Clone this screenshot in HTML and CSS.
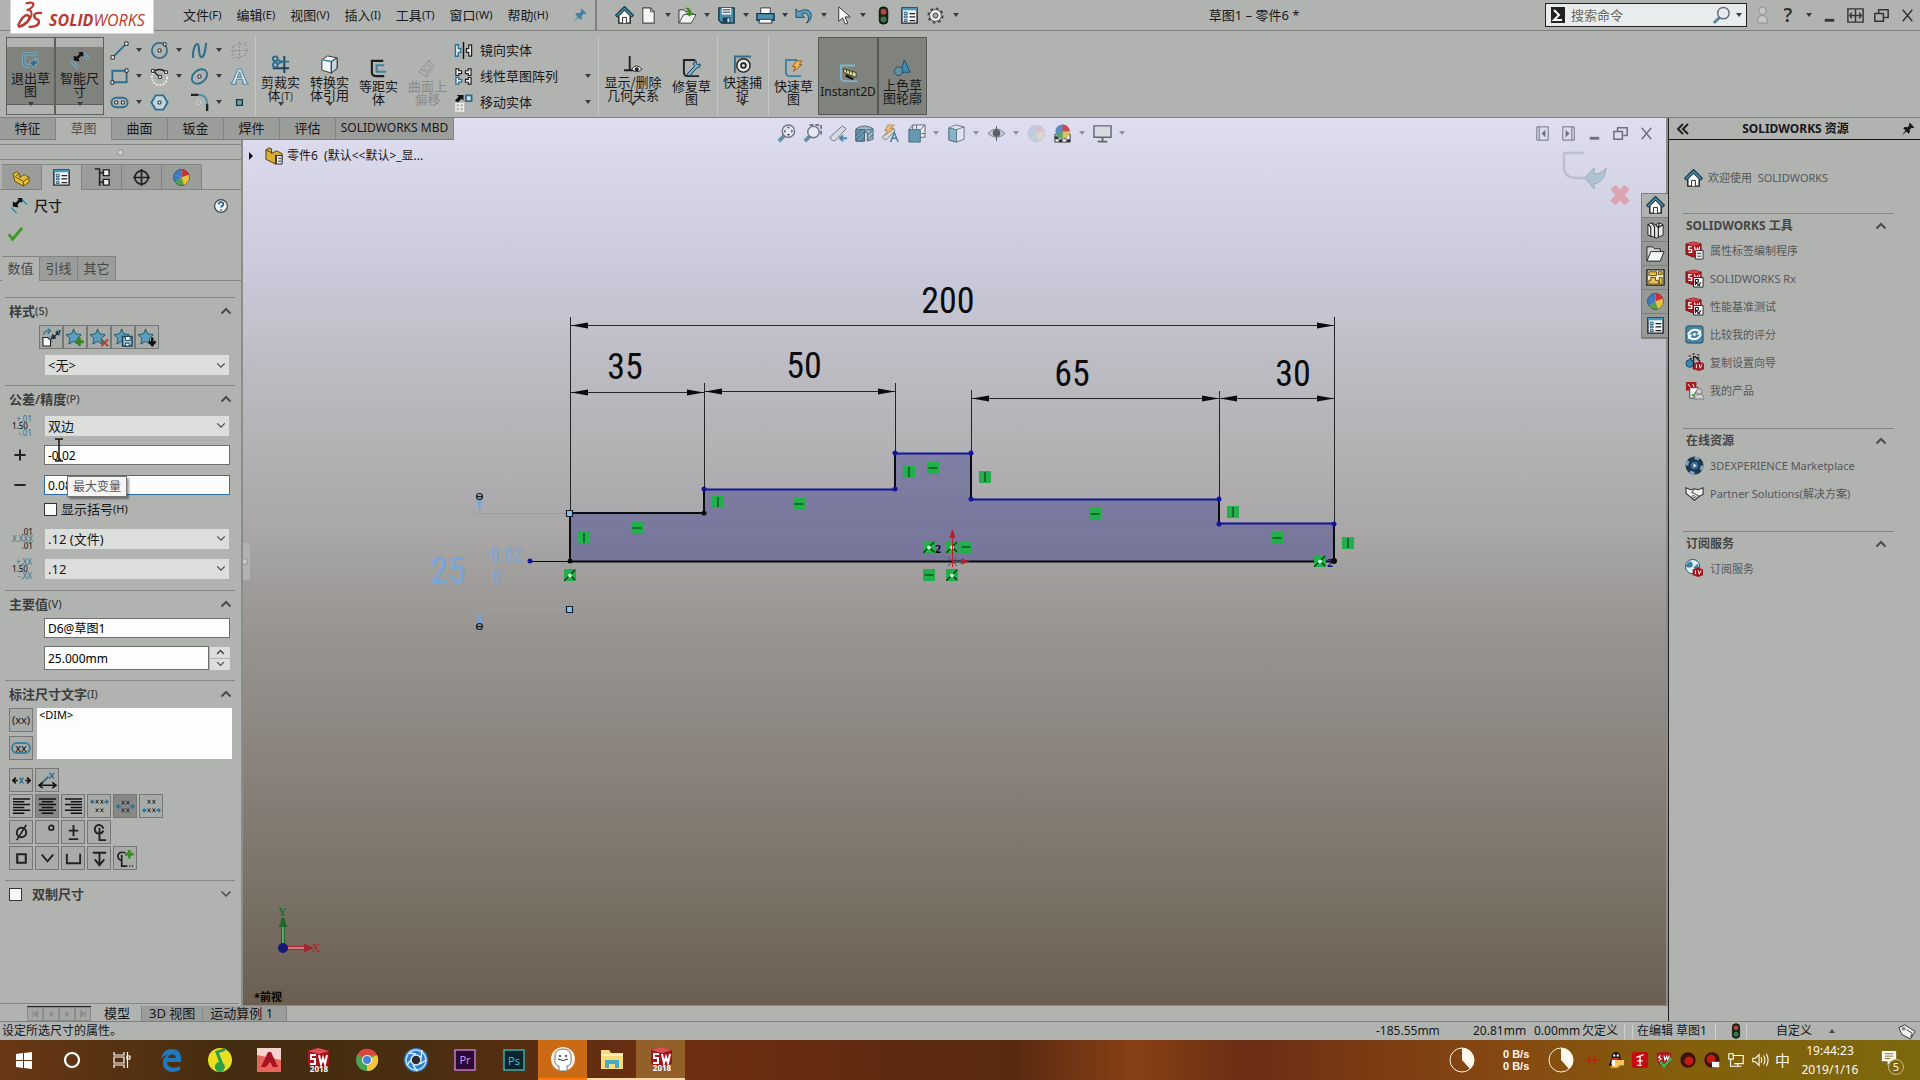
FILE: index.html
```html
<!DOCTYPE html>
<html lang="zh-CN">
<head>
<meta charset="utf-8">
<title>草图1 – 零件6 *</title>
<link rel="stylesheet" href="styles.css">
</head>
<body>
<svg class="sprite" aria-hidden="true">
  <defs>
    <symbol id="i-down" viewBox="0 0 6 4"><path d="M0 0h6L3 4z" fill="#3c3c3c"/></symbol>
    <symbol id="i-chevup" viewBox="0 0 12 8"><path d="M1.500 6.500 6 2l4.500 4.500" fill="none" stroke="#4a4c4a" stroke-width="2"/></symbol>
    <symbol id="i-chevdown" viewBox="0 0 12 8"><path d="M1.500 1.500 6 6l4.500-4.500" fill="none" stroke="#4a4c4a" stroke-width="1.500"/></symbol>
    <symbol id="i-home" viewBox="0 0 20 20"><path d="M4 10v8h12v-8l-6-6z" fill="#fff" stroke="#222" stroke-width="1.500"/><path d="M1 11 10 2l9 9" fill="none" stroke="#1d4052" stroke-width="3.500"/><path d="M2 10.500 10 2.800l8 7.700" fill="none" stroke="#4f9dbd" stroke-width="1.200"/><path d="M8 18v-6h4v6" fill="#fff" stroke="#222"/></symbol>
    <symbol id="i-new" viewBox="0 0 20 20"><path d="M4 2h8l4 4v12H4z" fill="#f4f6f6" stroke="#4a4d4d" stroke-width="1.200"/><path d="M12 2v4h4" fill="none" stroke="#4a4d4d"/></symbol>
    <symbol id="i-open" viewBox="0 0 20 20"><path d="M1 18V4h5l2 2h4" fill="#e5e8e8" stroke="#333"/><path d="M1 18 6 9h13l-5 9z" fill="#f3f3ee" stroke="#444"/><path d="M7 2c4-1 7 1 7 5h3l-5 4-4-4h3c0-2-1-4-4-5z" fill="#3f8a25"/></symbol>
    <symbol id="i-save" viewBox="0 0 20 20"><path d="M2 2h16v16H5l-3-3z" fill="#4b8fae" stroke="#123246" stroke-width="1.500"/><path d="M5 2h10v7H5z" fill="#eef3f5"/><path d="M6 4h8M6 6.500h8" stroke="#234" /><path d="M6 12h8v6H6z" fill="#223f50"/><path d="M11 13h2v4h-2z" fill="#dde"/></symbol>
    <symbol id="i-print" viewBox="0 0 20 20"><path d="M5 2h10v6H5z" fill="#fff" stroke="#333"/><path d="M1 8h18v7H1z" fill="#4f93b2" stroke="#12384d" stroke-width="1.500"/><path d="M4 14h12l1 4H3z" fill="#fff" stroke="#333"/></symbol>
    <symbol id="i-undo" viewBox="0 0 20 20"><path d="M1 3v9h9L7 9c4-3 8-1 7 6l-2 3c7-3 7-14-1-14-3 0-5 1-7 2z" fill="#5b9dc0" stroke="#1c4d6c"/></symbol>
    <symbol id="i-cursor" viewBox="0 0 20 20"><path d="M5 1v15l4-3.500 3 6.500 2.500-1-3-6.500H17z" fill="#fff" stroke="#333"/></symbol>
    <symbol id="i-light" viewBox="0 0 20 20"><rect x="5.500" y="1" width="9" height="18" rx="4" fill="#16281b" stroke="#111"/><circle cx="10" cy="6" r="3" fill="#b8443c"/><circle cx="10" cy="14" r="3" fill="#3c7a45"/></symbol>
    <symbol id="i-props" viewBox="0 0 20 20"><path d="M2 2h16v16H2z" fill="#f2f5f5" stroke="#223" stroke-width="1.500"/><path d="M2 2h16v2.500H2z" fill="#4a96b6"/><path d="M4.500 6.500h3v2.500h-3zM4.500 10.500h3v2h-3zM4.500 14.500h3v2h-3z" fill="#d6e8ef" stroke="#1f5a78"/><path d="M10 8h6M10 11.500h6M10 15.500h6" stroke="#222" stroke-width="1.300"/></symbol>
    <symbol id="i-gear" viewBox="0 0 20 20"><circle cx="10" cy="10" r="7.500" fill="none" stroke="#444" stroke-width="2" stroke-dasharray="3 2.890"/><circle cx="10" cy="10" r="6.200" fill="#f0f0ee" stroke="#444"/><circle cx="10" cy="10" r="2.600" fill="#aaa" stroke="#333"/></symbol>
    <symbol id="i-pin" viewBox="0 0 20 20"><path d="M12 2l6 6-2 1-1-1-3 3c1 2 0 4-1 5l-3-3-6 5 5-6-3-3c1-1 3-2 5-1l3-3-1-1z" fill="currentColor"/></symbol>
    <symbol id="i-exit" viewBox="0 0 20 20"><path d="M18 3H3v9q0 4 5 4h1" fill="none" stroke="#8fbfd3" stroke-width="3"/><path d="M18 3H3v9q0 4 5 4h1" fill="none" stroke="#3f7d99" stroke-width="1.500"/><path d="M18 8v4q0 2-3 2v4l-6-5 6-5v3h1V8z" fill="#2d6a89" stroke="#b5d3df" stroke-width=".6"/></symbol>
    <symbol id="i-dim" viewBox="0 0 20 20"><path d="M13 2l6 6M2 11l6 6" stroke="#9ecbdc" stroke-width="3"/><path d="M13 2l6 6M2 11l6 6" stroke="#3a7b98" stroke-width="1.500"/><path d="M3 9V4l3 1 3-3-1-2h5v5l-2-1-3 3 1 3z" fill="#111" transform="translate(1 1)"/></symbol>
    <symbol id="i-line" viewBox="0 0 20 20"><path d="M3 17 17 3" stroke="#2e6f8e" stroke-width="2"/><path d="M1 15.500h3.500V19H1zM15.500 1H19v3.500h-3.500z" fill="#fff" stroke="#222"/></symbol>
    <symbol id="i-circle" viewBox="0 0 20 20"><circle cx="10" cy="10" r="8" fill="none" stroke="#2e6f8e" stroke-width="1.800"/><path d="M8.500 8.500h3v3h-3zM14 2h3v3h-3z" fill="#fff" stroke="#222"/></symbol>
    <symbol id="i-spline" viewBox="0 0 20 20"><path d="M3 18C3 5 8 0 9 5c1 5 0 12 3 12s4-6 5-15" fill="none" stroke="#2e6f8e" stroke-width="2.200"/></symbol>
    <symbol id="i-plane" viewBox="0 0 20 20"><path d="M3 5l14-3v13L3 18zM10 1v18M1 10h18" fill="none" stroke="#858785" stroke-dasharray="2 2"/></symbol>
    <symbol id="i-rect" viewBox="0 0 20 20"><path d="M2.500 4h15v12h-15z" fill="none" stroke="#2e6f8e" stroke-width="2"/><path d="M1 14.500h3V18H1zM16 2h3v3.500h-3z" fill="#fff" stroke="#222"/></symbol>
    <symbol id="i-arc" viewBox="0 0 20 20"><circle cx="10" cy="11" r="8" fill="none" stroke="#ececec" stroke-width="2" stroke-dasharray="2 1.500"/><path d="M3 4l8 7M3 6a9 9 0 0 1 14 0" fill="none" stroke="#222" stroke-width="1.500"/><path d="M1.500 2.500h3v3h-3zM15.500 4h3v3h-3zM9 9h3v3H9z" fill="#fff" stroke="#222"/></symbol>
    <symbol id="i-ellipse" viewBox="0 0 20 20"><ellipse cx="10" cy="10" rx="9" ry="6.500" transform="rotate(-40 10 10)" fill="none" stroke="#2e6f8e" stroke-width="2"/><path d="M8.500 8.500h3v3h-3z" fill="#fff" stroke="#222"/></symbol>
    <symbol id="i-texta" viewBox="0 0 20 20"><path d="M1 18h6v-1.500H5.800L7 13h6l1.200 3.500H13V18h6v-1.500h-1.300L11.500 2h-3L2.300 16.500H1zM7.700 11 10 5l2.300 6z" fill="#cfe2ea" stroke="#47809a"/></symbol>
    <symbol id="i-slot" viewBox="0 0 20 20"><rect x="1.500" y="5" width="17" height="10" rx="5" fill="none" stroke="#2e6f8e" stroke-width="2"/><path d="M5 8.500h3v3H5zM12 8.500h3v3h-3z" fill="#fff" stroke="#222"/></symbol>
    <symbol id="i-poly" viewBox="0 0 20 20"><path d="M6 2.500h8l4.500 7.500-4.500 7.500H6L1.500 10z" fill="#c0d6df" stroke="#2e6f8e" stroke-width="2"/><path d="M8.500 8.500h3v3h-3z" fill="#fff" stroke="#222"/></symbol>
    <symbol id="i-fillet" viewBox="0 0 20 20"><path d="M1 2h8M18 11v8" stroke="#222" stroke-width="2.500"/><path d="M9 2q9 0 9 9" fill="none" stroke="#4a8ba8" stroke-width="2"/><circle cx="9" cy="10" r="2.500" fill="none" stroke="#eee" stroke-dasharray="1 1"/></symbol>
    <symbol id="i-point" viewBox="0 0 20 20"><path d="M7 7h6v6H7z" fill="#6fa5ad" stroke="#1d3a44" stroke-width="1.500"/></symbol>
    <symbol id="i-trim" viewBox="0 0 20 20"><path d="M14 1v18M2 14h17" stroke="#1c4358" stroke-width="2"/><path d="M14 8 6 5M14 6 6 10M19 7h-6" stroke="#2e6f8e" stroke-width="2"/><circle cx="4.500" cy="4" r="2.500" fill="none" stroke="#2e6f8e" stroke-width="2"/><circle cx="4.500" cy="10.500" r="2.500" fill="none" stroke="#2e6f8e" stroke-width="2"/></symbol>
    <symbol id="i-convert" viewBox="0 0 20 20"><path d="M2 5 8 1l10 2v11l-6 5-10-3z" fill="#f3f5f5" stroke="#333"/><path d="M2 5l10 2 6-4M12 7v12" fill="none" stroke="#4a8ba8" stroke-width="1.800"/><path d="M12 7l6-4v11l-6 5z" fill="#c4d4da" stroke="#333"/></symbol>
    <symbol id="i-offset" viewBox="0 0 20 20"><path d="M15 2H3v12q0 4 4 4h9" fill="none" stroke="#1d1f20" stroke-width="2.200"/><path d="M16 6.500H8v5q0 2 2 2h8" fill="none" stroke="#3b82a3" stroke-width="2.200"/></symbol>
    <symbol id="i-surf" viewBox="0 0 20 20"><path d="M3 11 10 3q4-1 7 5l-7 8q-2-4-7-5zM7 10l4-4q2 0 3 2l-4 5zM10 3l3-2M3 11l-2 3 9 5v-3" fill="none" stroke="#8d8f8d"/></symbol>
    <symbol id="i-mirror" viewBox="0 0 20 20"><path d="M10 1v18" stroke="#111" stroke-width="1.500"/><path d="M1.500 4h3v4H7v4H4.500v4h-3z" fill="#eef4f6" stroke="#2e6f8e" stroke-width="1.500"/><path d="M18.500 4h-3v4H13v4h2.500v4h3z" fill="#eee" stroke="#222" stroke-width="1.300"/></symbol>
    <symbol id="i-pattern" viewBox="0 0 20 20"><path d="M2 2h3v2h3v3H5v2H2zM18 2h-3v2h-3v3h3v2h3zM18 18h-3v-2h-3v-3h3v-2h3z" fill="#eee" stroke="#222" stroke-width="1.200"/><path d="M2 11h3v2h3v3H5v2H2z" fill="#eee" stroke="#2e6f8e" stroke-width="1.400"/></symbol>
    <symbol id="i-move" viewBox="0 0 20 20"><path d="M1 8l4-4-2-2h7v6L8 6 4 10z" fill="#111"/><path d="M12.500 2.500h6v6h-6z" fill="#cfe1e8" stroke="#2e6f8e" stroke-width="2"/><path d="M2 11h8v8H2zM2 15h8M6 11v8" fill="none" stroke="#eee" stroke-width="1.500"/></symbol>
    <symbol id="i-rel" viewBox="0 0 20 20"><path d="M6 1v14M0 16h11" stroke="#222" stroke-width="2"/><path d="M8 15q5-7 11 0-6 5-11 0z" fill="#fff" stroke="#222"/><circle cx="13.500" cy="15" r="2.200" fill="#222"/></symbol>
    <symbol id="i-repair" viewBox="0 0 20 20"><path d="M14 1H2v13q0 4 4 4h12" fill="none" stroke="#222" stroke-width="2"/><path d="M6 15l7-7-1-4 3-2v3l2 1 2-1v3l-4 2-6 7-3 1z" fill="#7bb0ca" stroke="#123a52"/></symbol>
    <symbol id="i-snap" viewBox="0 0 20 20"><path d="M19 1.500H2V19" fill="none" stroke="#2e6f8e" stroke-width="2"/><circle cx="11" cy="11" r="7" fill="#e3e5e5" stroke="#222" stroke-width="1.500"/><circle cx="11" cy="11" r="2.500" fill="none" stroke="#222" stroke-width="1.800"/></symbol>
    <symbol id="i-rapid" viewBox="0 0 20 20"><path d="M14 1H2v13q0 4 4 4h12" fill="none" stroke="#3b82a3" stroke-width="2"/><path d="M13 2h6l-3 4h3l-9 7 2-5H9z" fill="#f2b65a" stroke="#9a5a16"/></symbol>
    <symbol id="i-inst" viewBox="0 0 20 20"><path d="M17 1.500H2V14q0 4 4 4h13" fill="none" stroke="#7fb4ca" stroke-width="2"/><path d="M5 5l13 4v5L5 9z" fill="#e9e27c" stroke="#333"/><path d="M8 6v3M11 7v3M14 8v3" stroke="#333"/><path d="M7 12l8 4" stroke="#111" stroke-width="2.500"/></symbol>
    <symbol id="i-shade" viewBox="0 0 20 20"><path d="M12 2l6 13H8z" fill="#3f8cb5" stroke="#1f4d68"/><circle cx="6" cy="14" r="4.500" fill="#5c97b5" fill-opacity=".7" stroke="#1f4d68"/></symbol>
    <symbol id="i-part" viewBox="0 0 20 20"><path d="M1 6l4-2 3 2v4l5-3 5 3v5l-6 4L3 14z" fill="#e6bd3f" stroke="#63500f"/><path d="M3 9l9 5 6-4M12 14v5M8 6 4 8" fill="none" stroke="#63500f"/></symbol>
    <symbol id="i-tree" viewBox="0 0 20 20"><path d="M3 1h5v18M7 5h5M7 15h5" fill="none" stroke="#222" stroke-width="1.600"/><path d="M12 2h6v6h-6zM12 12h6v6h-6z" fill="#eee" stroke="#222" stroke-width="1.500"/></symbol>
    <symbol id="i-target" viewBox="0 0 20 20"><circle cx="10" cy="10" r="7" fill="none" stroke="#222" stroke-width="1.800"/><path d="M10 1v18M1 10h18" stroke="#222" stroke-width="1.800"/></symbol>
    <symbol id="i-ball" viewBox="0 0 20 20"><circle cx="10" cy="10" r="9" fill="#e6e6e6"/><path d="M10 10 2 6A9 9 0 0 1 10 1z" fill="#3b78bd"/><path d="M10 10V1a9 9 0 0 1 8 6z" fill="#d03030"/><path d="M10 10l8-3a9 9 0 0 1-5 11z" fill="#e9c13d"/><path d="M10 10l3 8.500A9 9 0 0 1 3 15z" fill="#55a049"/><path d="M10 10l-7 5a9 9 0 0 1-1-9z" fill="#3b78bd"/><circle cx="10" cy="10" r="8.500" fill="none" stroke="#555"/></symbol>
    <symbol id="i-help" viewBox="0 0 20 20"><circle cx="10" cy="10" r="8" fill="#eef3f5" stroke="#444" stroke-width="1.500"/><path d="M7 8c0-4 6-4 6 0 0 2-3 2-3 4M10 14v2" fill="none" stroke="#22607f" stroke-width="2"/></symbol>
    <symbol id="i-check" viewBox="0 0 20 20"><path d="M3 11l4 5L17 4" fill="none" stroke="#3f9a22" stroke-width="3"/></symbol>
    <symbol id="i-fav" viewBox="0 0 20 20"><path d="M1 10h5l3 3v6H1z" fill="#fff" stroke="#222" stroke-width="1.200"/><path d="M2 7q0-4 5-4M6 1l3 2-3 3" fill="none" stroke="#2e6f8e" stroke-width="1.500"/><path d="M9 12l2-6 2 2 2-2-1-2 6-2-2 6-2-1-2 2 1 2z" fill="#1c2f3b"/><path d="M8 8l3 7M16 1l3 7" stroke="#4a8ba8"/></symbol>
    <symbol id="i-star" viewBox="0 0 20 20"><path d="M8 1l2 5 6 1-4 4 1 6-5-3-5 3 1-6-4-4 6-1z" fill="#5d9dbb" stroke="#1e566f"/></symbol>
    <symbol id="i-plus" viewBox="0 0 20 20"><path d="M10 3v14M3 10h14" stroke="#222" stroke-width="2.500"/></symbol>
    <symbol id="i-minus" viewBox="0 0 20 20"><path d="M3 10h14" stroke="#222" stroke-width="2.500"/></symbol>
    <symbol id="i-mag" viewBox="0 0 20 20"><path d="M9 11 2 18" stroke="#5b86a0" stroke-width="3"/><circle cx="12" cy="7.500" r="6" fill="#e6ebf2" stroke="#666c78" stroke-width="1.500"/></symbol>
    <symbol id="i-magfit" viewBox="0 0 20 20"><path d="M9 11 2 18" stroke="#5b86a0" stroke-width="4"/><circle cx="12" cy="7.500" r="6.500" fill="#e6ebf2" stroke="#666c78" stroke-width="1.500"/><path d="M12 2.500l2 2h-4zM12 12.500l2-2h-4zM7 7.500l2-2v4zM17 7.500l-2-2v4z" fill="#444a56"/></symbol>
    <symbol id="i-magarea" viewBox="0 0 20 20"><path d="M7 1h12v12" fill="none" stroke="#444a56" stroke-dasharray="4 2" stroke-width="1.500"/><path d="M8 12 2 18" stroke="#5b86a0" stroke-width="4"/><circle cx="11" cy="8.500" r="6" fill="#e6ebf2" stroke="#666c78" stroke-width="1.500"/></symbol>
    <symbol id="i-scope" viewBox="0 0 20 20"><path d="M1 14 14 2l4 3L7 17q-4 2-6-3z" fill="#d7dae2" stroke="#666c78"/><path d="M19 15h-8m0 0 4-3m-4 3 4 3" stroke="#3f80a0" stroke-width="2"/></symbol>
    <symbol id="i-section" viewBox="0 0 20 20"><path d="M1 5q9-6 18 0v11l-6 2V9h-3v9H1z" fill="#8db3c6" stroke="#4a5a66"/><path d="M10 9q0-3 4-3h5" fill="none" stroke="#4a5a66"/><path d="M1 6h9v12H1z" fill="#5b93b0" stroke="#39566a"/><path d="M1 12l6-6M1 17 10 8M6 18l4-4M13 17l6-6M13 12l5-5" stroke="#33505f" fill="none"/></symbol>
    <symbol id="i-annot" viewBox="0 0 20 20"><path d="M1 14 12 4l3 3L6 16q-3 1-5-2z" fill="#d7dae2" stroke="#777"/><path d="M7 1h7l-4 4h4l-10 7 3-5H4z" fill="#e9b56b" stroke="#a8793c" stroke-width=".8"/><path d="M10 19l4-10 4 10M12 15h5" fill="none" stroke="#39799a" stroke-width="1.600"/></symbol>
    <symbol id="i-orient" viewBox="0 0 20 20"><path d="M6 1h13v13H6z" fill="#e7e9f0" stroke="#50616c"/><path d="M2 6h12v13H2z" fill="#5893ae" stroke="#3e6070"/><path d="M14 6l5-5M2 6l4-5M15 10h4M10 1v5" stroke="#50616c"/></symbol>
    <symbol id="i-cube" viewBox="0 0 20 20"><path d="M2 4l7-3 9 2v13l-8 3-8-2z" fill="#dfe7ef" stroke="#5c6c78"/><path d="M2 4l8 2v13l-8-2z" fill="#7fb0c6" stroke="#4b6a79"/><path d="M10 6l8-3" stroke="#5c6c78"/></symbol>
    <symbol id="i-eye" viewBox="0 0 20 20"><path d="M1 10q9-10 18 0-9 8-18 0z" fill="#c9cad4" stroke="#777b84"/><circle cx="10" cy="9.500" r="4" fill="#4e525a"/><path d="M10 2v16" stroke="#4e525a"/></symbol>
    <symbol id="i-scene" viewBox="0 0 20 20"><path d="M2 11h16v8H2z" fill="#fff" stroke="#222"/><path d="M2 13h4v3H2zM10 13h4v3h-4zM6 16h4v3H6zM14 16h4v3h-4z" fill="#222"/><circle cx="10" cy="8" r="7.500" fill="#4d84bf"/><path d="M10 8V.5A7.500 7.500 0 0 1 17.500 8z" fill="#ca3d3d"/><path d="M10 8h7.500A7.500 7.500 0 0 1 10 15.500z" fill="#e2c14c"/><path d="M10 8v7.500A7.500 7.500 0 0 1 3 10z" fill="#4ea357"/></symbol>
    <symbol id="i-monitor" viewBox="0 0 20 20"><path d="M1 2h18v12H1z" fill="#d9dae0" stroke="#555a62" stroke-width="1.500"/><path d="M10 14v4M5 18.500h10" stroke="#555a62" stroke-width="2"/></symbol>
    <symbol id="i-min" viewBox="0 0 20 20"><path d="M5 15h10" stroke="currentColor" stroke-width="3"/></symbol>
    <symbol id="i-restore" viewBox="0 0 20 20"><path d="M3 8h9v8H3zM7 7V4h10v8h-4" fill="none" stroke="currentColor" stroke-width="1.600"/></symbol>
    <symbol id="i-close" viewBox="0 0 20 20"><path d="M5 4l10 12M15 4 5 16" stroke="currentColor" stroke-width="1.500"/></symbol>
    <symbol id="i-span" viewBox="0 0 20 20"><path d="M2 3h16v14H2zM10 3v14" fill="none" stroke="currentColor" stroke-width="1.500"/><path d="M4 10h12M6 7l-2 3 2 3M14 7l2 3-2 3" fill="none" stroke="currentColor" stroke-width="1.500"/></symbol>
    <symbol id="i-dockl" viewBox="0 0 20 20"><path d="M4 3h12v14H4zM6.500 3v14" fill="none" stroke="currentColor"/><path d="M13 6v8l-4-4z" fill="currentColor"/></symbol>
    <symbol id="i-dockr" viewBox="0 0 20 20"><path d="M4 3h12v14H4zM13.500 3v14" fill="none" stroke="currentColor"/><path d="M7 6v8l4-4z" fill="currentColor"/></symbol>
    <symbol id="i-user" viewBox="0 0 20 20"><circle cx="10" cy="5" r="4" fill="#c4c6c4" stroke="#8b8d8b"/><path d="M5 18q-1-8 5-8t5 8z" fill="#c4c6c4" stroke="#8b8d8b"/></symbol>
    <symbol id="i-books" viewBox="0 0 20 20"><path d="M2 5l4-2 4 2 4-2 4 2v11l-7 3-9-3z" fill="#e8eaea" stroke="#222"/><path d="M2 5l3 2v11M6 3l3 4v11M10 5l3 3v10M14 3l-1 5 5-3" fill="none" stroke="#222" stroke-width="1.200"/></symbol>
    <symbol id="i-folder" viewBox="0 0 20 20"><path d="M1 18V3h6l2 2h6v3" fill="#d5d8d8" stroke="#222"/><path d="M1 18 5 8h14l-4 10z" fill="#f3f5f5" stroke="#222"/></symbol>
    <symbol id="i-layout" viewBox="0 0 20 20"><path d="M1 2h18v16H1z" fill="#f6f0d0" stroke="#222" stroke-width="1.500"/><path d="M3 4h8v4H3zM13 4h4v3h-4zM5 10h5v3h3v4H3v-4h2zM14 10h3v7h-3z" fill="#e9c14c" stroke="#5e4a10"/></symbol>
    <symbol id="i-sw" viewBox="0 0 20 20"><path d="M1 3l8-2 8 2v11l-8 3-8-3z" fill="#ab1720" stroke="#5e0b10" stroke-width=".8"/><path d="M1 3l8-2 8 2-8 2z" fill="#d4434a"/><path d="M7 6H4v3h3v3H3.500M10 6l1.500 6L13 8l1 4 1.500-6" fill="none" stroke="#fff" stroke-width="1.300"/></symbol>
    <symbol id="i-swdoc" viewBox="0 0 20 20"><use href="#i-sw"/><path d="M11 10h8v9h-8z" fill="#eceeee" stroke="#333"/><path d="M13 13h4M13 16h4" stroke="#333"/></symbol>
    <symbol id="i-swrx" viewBox="0 0 20 20"><use href="#i-sw"/><path d="M9 9h10v10H9z" fill="#fff" stroke="#222"/><path d="M11 17v-6h3v3h-3l5 4M17 14l-4 4" fill="none" stroke="#222" stroke-width="1.200"/></symbol>
    <symbol id="i-compare" viewBox="0 0 20 20"><rect x="1" y="1" width="18" height="18" rx="2" fill="#4787a5" stroke="#1d4b63"/><path d="M3 10q3-5 8-5 3 0 5 3M17 10q-3 5-8 5-3 0-5-3" fill="none" stroke="#fff" stroke-width="2"/><path d="M17 5v5h-5zM3 15v-5h5z" fill="#fff"/><circle cx="10" cy="10" r="1.500" fill="#fff"/></symbol>
    <symbol id="i-copy" viewBox="0 0 20 20"><circle cx="5" cy="11" r="4" fill="#3a87ba" stroke="#12405c"/><path d="M9 17V4h2l5 5M4 3h2M8 1h2M13 2h2M5 6h2M13 5h2" stroke="#222" stroke-width="1.500" fill="none"/><path d="M9 11l6-2 5 2v6l-5 2-6-2z" fill="#a31720"/><path d="M12 12v4M15 12l1 4 2-4" stroke="#fff" fill="none"/></symbol>
    <symbol id="i-myprod" viewBox="0 0 20 20"><path d="M1 1h11v9H1z" fill="#ab1720"/><path d="M3 3l3 4M8 3l2 4" stroke="#fff"/><path d="M5 7h9v11H5z" fill="#f3f3f3" stroke="#444"/><path d="M7 14l2 2 3-5" stroke="#3a8f2e" fill="none" stroke-width="1.500"/><circle cx="15" cy="11" r="3" fill="#cfd1cf" stroke="#777"/><path d="M10 19q0-5 5-5t5 5z" fill="#cfd1cf" stroke="#777"/></symbol>
    <symbol id="i-market" viewBox="0 0 20 20"><circle cx="10" cy="10" r="9.500" fill="#1e3850"/><circle cx="10" cy="10" r="8" fill="none" stroke="#7fa5c4" stroke-width="3" stroke-dasharray="5 7.500"/><circle cx="10" cy="10" r="4" fill="#3b6f9e"/><path d="M9 8l3 2-3 2z" fill="#fff"/></symbol>
    <symbol id="i-hand" viewBox="0 0 20 20"><path d="M1 4l5 2 4-1 4 1 5-2v7l-4 2-5 4-5-4-4-3z" fill="#f1f1ef" stroke="#333" stroke-width="1.200"/><path d="M10 5l-3 4 3 1 5 3M7 13l3-1M8 15l4-2" fill="none" stroke="#333"/></symbol>
    <symbol id="i-globe" viewBox="0 0 20 20"><circle cx="8" cy="8" r="7.500" fill="#e4edf1" stroke="#1e4f68"/><path d="M3 4q4-3 5 1t-3 4-4-2zM9 9l4-4 2 4-3 4z" fill="#3b82a3"/><path d="M8 11l6-2 5 2v6l-5 2-6-2z" fill="#a31720"/><path d="M11 12v4M14 12l1 4 2-4" stroke="#fff" fill="none"/></symbol>
    <symbol id="i-swbig" viewBox="0 0 26 26"><path d="M3 4l10-3 11 3v14l-11 4L3 18z" fill="#a5141d"/><path d="M3 4l10-3 11 3-10 3z" fill="#dc5057"/><path d="M11 8H6v4h4v5H5M14 8l2 9 2-6 2 6 2-9" fill="none" stroke="#fff" stroke-width="2"/><text x="14" y="25" font-family="Open Sans, sans-serif" font-size="8" font-weight="700" text-anchor="middle" fill="#fff">2018</text></symbol>
    <symbol id="g-h" viewBox="0 0 12 12"><path d="M0 0h12v12H0z" fill="#22b04a"/><path d="M1.500 6h9" stroke="#052a10"/></symbol>
    <symbol id="g-v" viewBox="0 0 12 12"><path d="M0 0h12v12H0z" fill="#22b04a"/><path d="M6 1v10" stroke="#052a10"/></symbol>
    <symbol id="g-c" viewBox="0 0 12 12"><path d="M0 0h12v12H0z" fill="#22b04a"/><path d="M0 12 11 1M7 7l4 4" stroke="#052a10" stroke-width="1.200"/><circle cx="6" cy="6.500" r="2" fill="#bdf0c8"/></symbol>
  </defs>
</svg>

<div class="app">
  <header class="menubar">
    <div class="logo">
      <svg class="logo-mark" viewBox="0 0 28 28"><path d="M9 2q8-2 8 1-1 4-7 6 6-1 5 5-2 8-13 12" fill="none" stroke="#b83a30" stroke-width="2.200"/><path d="M1 25Q6 14 11 14q4 2-1 8-4 4-9 4M26 12q-7-1-8 2t4 5q2 4-2 6-3 2-8 1" fill="none" stroke="#b83a30" stroke-width="2.500"/></svg>
      <span class="logo-text"><b>SOLID</b>WORKS</span>
    </div>
    <nav class="menus">
      <button>文件<small>(F)</small></button><button>编辑<small>(E)</small></button><button>视图<small>(V)</small></button><button>插入<small>(I)</small></button><button>工具<small>(T)</small></button><button>窗口<small>(W)</small></button><button>帮助<small>(H)</small></button>
    </nav>
    <button class="menupin" aria-label="固定"><svg class="ic16"><use href="#i-pin"/></svg></button>
    <div class="qat">
      <button aria-label="主页"><svg class="ic"><use href="#i-home"/></svg></button>
      <button aria-label="新建"><svg class="ic"><use href="#i-new"/></svg></button><button class="dd" aria-label="更多"><svg><use href="#i-down"/></svg></button>
      <button aria-label="打开"><svg class="ic"><use href="#i-open"/></svg></button><button class="dd" aria-label="更多"><svg><use href="#i-down"/></svg></button>
      <button aria-label="保存"><svg class="ic"><use href="#i-save"/></svg></button><button class="dd" aria-label="更多"><svg><use href="#i-down"/></svg></button>
      <button aria-label="打印"><svg class="ic"><use href="#i-print"/></svg></button><button class="dd" aria-label="更多"><svg><use href="#i-down"/></svg></button>
      <button aria-label="撤销"><svg class="ic"><use href="#i-undo"/></svg></button><button class="dd" aria-label="更多"><svg><use href="#i-down"/></svg></button>
      <button aria-label="选择"><svg class="ic"><use href="#i-cursor"/></svg></button><button class="dd" aria-label="更多"><svg><use href="#i-down"/></svg></button>
      <button class="wide" aria-label="重建"><svg class="ic"><use href="#i-light"/></svg></button>
      <button class="wide" aria-label="文件属性"><svg class="ic"><use href="#i-props"/></svg></button>
      <button class="wide" aria-label="选项"><svg class="ic"><use href="#i-gear"/></svg></button><button class="dd" aria-label="更多"><svg><use href="#i-down"/></svg></button>
    </div>
    <h1 class="doc-title">草图1 – 零件6 *</h1>
    <div class="search">
      <svg class="ic16" viewBox="0 0 16 16"><path d="M1 0h14v16H1z" fill="#222"/><path d="M4 3l5 5-5 5h8" fill="none" stroke="#fff" stroke-width="2"/></svg>
      <input type="text" placeholder="搜索命令" aria-label="搜索命令">
      <svg class="ic"><use href="#i-mag"/></svg>
      <svg class="tri"><use href="#i-down"/></svg>
    </div>
    <div class="winctl">
      <button aria-label="登录"><svg class="ic"><use href="#i-user"/></svg></button>
      <button class="q" aria-label="帮助">?</button><button class="dd" aria-label="更多"><svg><use href="#i-down"/></svg></button>
      <button aria-label="最小化"><svg class="ic"><use href="#i-min"/></svg></button>
      <button aria-label="跨越显示器"><svg class="ic"><use href="#i-span"/></svg></button>
      <button aria-label="还原"><svg class="ic"><use href="#i-restore"/></svg></button>
      <button aria-label="关闭"><svg class="ic"><use href="#i-close"/></svg></button>
    </div>
  </header>

  <div class="ribbon">
    <button class="big split"><span><svg class="ic"><use href="#i-exit"/></svg>退出草图</span><svg class="tri"><use href="#i-down"/></svg></button>
    <button class="big split"><span><svg class="ic"><use href="#i-dim"/></svg>智能尺寸</span><svg class="tri"><use href="#i-down"/></svg></button>
    <div class="entities">
      <button aria-label="直线"><svg class="ic"><use href="#i-line"/></svg><svg class="tri"><use href="#i-down"/></svg></button>
      <button aria-label="圆"><svg class="ic"><use href="#i-circle"/></svg><svg class="tri"><use href="#i-down"/></svg></button>
      <button aria-label="样条曲线"><svg class="ic"><use href="#i-spline"/></svg><svg class="tri"><use href="#i-down"/></svg></button>
      <button aria-label="基准面"><svg class="ic"><use href="#i-plane"/></svg></button>
      <button aria-label="矩形"><svg class="ic"><use href="#i-rect"/></svg><svg class="tri"><use href="#i-down"/></svg></button>
      <button aria-label="圆弧"><svg class="ic"><use href="#i-arc"/></svg><svg class="tri"><use href="#i-down"/></svg></button>
      <button aria-label="椭圆"><svg class="ic"><use href="#i-ellipse"/></svg><svg class="tri"><use href="#i-down"/></svg></button>
      <button aria-label="文字"><svg class="ic"><use href="#i-texta"/></svg></button>
      <button aria-label="槽口"><svg class="ic"><use href="#i-slot"/></svg><svg class="tri"><use href="#i-down"/></svg></button>
      <button aria-label="多边形"><svg class="ic"><use href="#i-poly"/></svg></button>
      <button aria-label="圆角"><svg class="ic"><use href="#i-fillet"/></svg><svg class="tri"><use href="#i-down"/></svg></button>
      <button aria-label="点"><svg class="ic"><use href="#i-point"/></svg></button>
    </div>
    <div class="group">
      <button class="big"><svg class="ic"><use href="#i-trim"/></svg>剪裁实体<small>(T)</small><svg class="tri"><use href="#i-down"/></svg></button>
      <button class="big"><svg class="ic"><use href="#i-convert"/></svg>转换实体引用<svg class="tri"><use href="#i-down"/></svg></button>
      <button class="big low"><svg class="ic"><use href="#i-offset"/></svg>等距实体</button>
      <button class="big low" disabled><svg class="ic"><use href="#i-surf"/></svg>曲面上偏移</button>
      <div class="list">
        <button><svg class="ic"><use href="#i-mirror"/></svg>镜向实体</button>
        <button><svg class="ic"><use href="#i-pattern"/></svg>线性草图阵列<svg class="tri"><use href="#i-down"/></svg></button>
        <button><svg class="ic"><use href="#i-move"/></svg>移动实体<svg class="tri"><use href="#i-down"/></svg></button>
      </div>
    </div>
    <div class="group">
      <button class="big w68"><svg class="ic"><use href="#i-rel"/></svg>显示/删除<br>几何关系<svg class="tri"><use href="#i-down"/></svg></button>
      <button class="big low"><svg class="ic"><use href="#i-repair"/></svg>修复草图</button>
    </div>
    <div class="group">
      <button class="big"><svg class="ic"><use href="#i-snap"/></svg>快速捕捉<svg class="tri"><use href="#i-down"/></svg></button>
    </div>
    <div class="group">
      <button class="big low"><svg class="ic"><use href="#i-rapid"/></svg>快速草图</button>
      <button class="big low on w60"><svg class="ic"><use href="#i-inst"/></svg><span class="latin">Instant2D</span></button>
      <button class="big low on"><svg class="ic"><use href="#i-shade"/></svg>上色草图轮廓</button>
    </div>
  </div>

  <div class="workspace">
    <main class="center">
      <div class="docrow">
        <aside class="panel">
          <nav class="cmdtabs"><button>特征</button><button class="active">草图</button><button>曲面</button><button>钣金</button><button>焊件</button><button>评估</button><button class="mbd">SOLIDWORKS MBD</button></nav>
          <div class="grip"><i></i></div>
          <nav class="fmtabs">
            <button aria-label="设计树"><svg class="ic"><use href="#i-part"/></svg></button>
            <button class="active" aria-label="属性"><svg class="ic"><use href="#i-props"/></svg></button>
            <button aria-label="配置"><svg class="ic"><use href="#i-tree"/></svg></button>
            <button aria-label="尺寸专家"><svg class="ic"><use href="#i-target"/></svg></button>
            <button aria-label="外观"><svg class="ic"><use href="#i-ball"/></svg></button>
          </nav>
          <div class="pm-title"><svg class="ic"><use href="#i-dim"/></svg><h2>尺寸</h2><button aria-label="帮助"><svg class="ic16"><use href="#i-help"/></svg></button></div>
          <button class="ok" aria-label="确定"><svg class="ic"><use href="#i-check"/></svg></button>
          <nav class="subtabs"><button class="active">数值</button><button>引线</button><button>其它</button></nav>

          <section class="sec">
            <h3>样式<small>(S)</small><svg class="chev"><use href="#i-chevup"/></svg></h3>
            <div class="styles">
              <button class="tb" aria-label="应用默认属性"><svg class="ic"><use href="#i-fav"/></svg></button><button class="tb" aria-label="添加样式"><svg class="ic" viewBox="0 0 20 20"><use href="#i-star"/><path d="M14 10v9M9.500 14.500h9" stroke="#3b7f1f" stroke-width="3"/></svg></button><button class="tb" aria-label="删除样式"><svg class="ic" viewBox="0 0 20 20"><use href="#i-star"/><path d="M12 12l7 7M19 12l-7 7" stroke="#b8392a" stroke-width="2"/></svg></button><button class="tb" aria-label="保存样式"><svg class="ic" viewBox="0 0 20 20"><use href="#i-star"/><path d="M9 9h10v10H9z" fill="#9cc3d6" stroke="#173f56" stroke-width="1.500"/><path d="M12 9h5v4h-5zM12 16h4v3h-4z" fill="#fff" stroke="#173f56"/></svg></button><button class="tb" aria-label="装入样式"><svg class="ic" viewBox="0 0 20 20"><use href="#i-star"/><path d="M15 10v8M11.500 14l3.500 4 3.500-4" fill="none" stroke="#111" stroke-width="2.500"/></svg></button>
            </div>
            <div class="field"><span class="combo"><select aria-label="当前样式"><option>&lt;无&gt;</option></select><svg><use href="#i-chevdown"/></svg></span></div>
          </section>

          <section class="sec">
            <h3>公差/精度<small>(P)</small><svg class="chev"><use href="#i-chevup"/></svg></h3>
            <div class="fields">
              <div class="field"><span class="glyph"><i>+.01</i><b>1.50</b><i>-.01</i></span><span class="combo"><select aria-label="公差类型"><option>双边</option></select><svg><use href="#i-chevdown"/></svg></span></div>
              <div class="field"><svg class="ic16"><use href="#i-plus"/></svg><input type="text" value="-0.02" aria-label="最大变量">
                <svg class="ibeam" viewBox="0 0 10 24"><path d="M1 1h3l1 1 1-1h3M5 2v20M1 23h3l1-1 1 1h3" fill="none" stroke="#111" stroke-width="1.500"/></svg></div>
              <div class="field"><svg class="ic16"><use href="#i-minus"/></svg><input class="focus" type="text" value="0.08" aria-label="最小变量"><span class="tip" role="tooltip">最大变量</span></div>
              <label class="tick"><input type="checkbox">显示括号<small>(H)</small></label>
              <div class="field"><span class="glyph"><b class="r">.01</b><i class="l">X.XXX</i><b class="r">.01</b></span><span class="combo"><select aria-label="单位精度"><option>.12 (文件)</option></select><svg><use href="#i-chevdown"/></svg></span></div>
              <div class="field"><span class="glyph"><i>+.XX</i><b>1.50</b><i>-.XX</i></span><span class="combo"><select aria-label="公差精度"><option>.12</option></select><svg><use href="#i-chevdown"/></svg></span></div>
            </div>
          </section>

          <section class="sec">
            <h3>主要值<small>(V)</small><svg class="chev"><use href="#i-chevup"/></svg></h3>
            <div class="field"><input type="text" value="D6@草图1" aria-label="尺寸名称"></div>
            <div class="field spin"><input type="text" value="25.000mm" aria-label="尺寸值"><span><button aria-label="增加"><svg><use href="#i-chevup"/></svg></button><button aria-label="减少"><svg><use href="#i-chevdown"/></svg></button></span></div>
          </section>

          <section class="sec">
            <h3>标注尺寸文字<small>(I)</small><svg class="chev"><use href="#i-chevup"/></svg></h3>
            <div class="dimtext">
              <div><button class="tb txt">(xx)</button><button class="tb txt pill"><i>xx</i></button></div>
              <textarea aria-label="标注尺寸文字">&lt;DIM&gt;</textarea>
            </div>
            <div class="tbrows">
              <div><button class="tb" aria-label="居中文字"><svg class="ic" viewBox="0 0 20 20"><path d="M1 10h5M14 10h5M4 7l-3 3 3 3M16 7l3 3-3 3" stroke="#111" stroke-width="1.800" fill="none"/><path d="M8 7l4 6M12 7l-4 6" stroke="#2e6f8e" stroke-width="1.500"/></svg></button><button class="tb" aria-label="偏移文字"><svg class="ic" viewBox="0 0 20 20"><path d="M2 15 11 6" stroke="#2e6f8e" stroke-width="2"/><path d="M12 2l5 6M17 2l-5 6" stroke="#2e6f8e" stroke-width="1.500"/><path d="M1 15h18M5 12l-4 3 4 3M15 12l4 3-4 3" stroke="#111" stroke-width="1.600" fill="none"/></svg></button></div>
              <div>
                <button class="tb" aria-label="左对齐"><svg class="ic" viewBox="0 0 20 20"><path d="M1 2h18M1 5h12M1 8h18M1 11h12M1 14h18M1 17h12" stroke="#111" stroke-width="1.600"/></svg></button>
                <button class="tb on" aria-label="居中"><svg class="ic" viewBox="0 0 20 20"><path d="M1 2h18M4 5h12M1 8h18M4 11h12M1 14h18M4 17h12" stroke="#111" stroke-width="1.600"/></svg></button>
                <button class="tb" aria-label="右对齐"><svg class="ic" viewBox="0 0 20 20"><path d="M1 2h18M7 5h12M1 8h18M7 11h12M1 14h18M7 17h12" stroke="#111" stroke-width="1.600"/></svg></button>
                <button class="tb" aria-label="上对齐"><svg class="ic" viewBox="0 0 20 20"><path d="M1 5h4M15 5h4M3 3 1 5l2 2M17 3l2 2-2 2" stroke="#2e6f8e" fill="none" stroke-width="1.500"/><path d="M6 3l3 4M9 3 6 7M11 3l3 4M14 3l-3 4M6 12l3 4M9 12l-3 4M11 12l3 4M14 12l-3 4" stroke="#222"/></svg></button>
                <button class="tb on" aria-label="中对齐"><svg class="ic" viewBox="0 0 20 20"><path d="M1 10h4M15 10h4M3 8l-2 2 2 2M17 8l2 2-2 2" stroke="#2e6f8e" fill="none" stroke-width="1.500"/><path d="M6 4l3 4M9 4 6 8M11 4l3 4M14 4l-3 4M6 12l3 4M9 12l-3 4M11 12l3 4M14 12l-3 4" stroke="#222"/></svg></button>
                <button class="tb" aria-label="下对齐"><svg class="ic" viewBox="0 0 20 20"><path d="M1 14h4M15 14h4M3 12l-2 2 2 2M17 12l2 2-2 2" stroke="#2e6f8e" fill="none" stroke-width="1.500"/><path d="M6 3l3 4M9 3 6 7M11 3l3 4M14 3l-3 4M6 12l3 4M9 12l-3 4M11 12l3 4M14 12l-3 4" stroke="#222"/></svg></button>
              </div>
              <div>
                <button class="tb" aria-label="直径"><svg class="ic" viewBox="0 0 20 20"><circle cx="10" cy="10" r="5" fill="none" stroke="#222" stroke-width="2"/><path d="M5 18 15 2" stroke="#222" stroke-width="1.800"/></svg></button>
                <button class="tb" aria-label="度数"><svg class="ic" viewBox="0 0 20 20"><circle cx="14" cy="5" r="2.500" fill="none" stroke="#222" stroke-width="1.800"/></svg></button>
                <button class="tb" aria-label="正负"><svg class="ic" viewBox="0 0 20 20"><path d="M10 2v12M5 8h10M5 17h10" stroke="#222" stroke-width="2"/></svg></button>
                <button class="tb" aria-label="中心线"><svg class="ic" viewBox="0 0 20 20"><path d="M14 6q-1-4-5-4-4 1-4 5 1 4 4 4 4 0 5-3M10 5v13h7" fill="none" stroke="#222" stroke-width="2"/></svg></button>
              </div>
              <div>
                <button class="tb" aria-label="方形"><svg class="ic" viewBox="0 0 20 20"><path d="M5.500 5.500h9v9h-9z" fill="none" stroke="#222" stroke-width="2.200"/></svg></button>
                <button class="tb" aria-label="埋头孔"><svg class="ic" viewBox="0 0 20 20"><path d="M4 6l6 7 6-7" fill="none" stroke="#222" stroke-width="2"/></svg></button>
                <button class="tb" aria-label="柱形沉头孔"><svg class="ic" viewBox="0 0 20 20"><path d="M3 5v10h14V5" fill="none" stroke="#222" stroke-width="2"/></svg></button>
                <button class="tb" aria-label="深度"><svg class="ic" viewBox="0 0 20 20"><path d="M3 4h14M10 4v13M5 11l5 6 5-6" fill="none" stroke="#222" stroke-width="2"/></svg></button>
                <button class="tb" aria-label="更多符号"><svg class="ic" viewBox="0 0 20 20"><path d="M10 4Q3 2 2 7q0 4 4 5M6 6v12h6M14 18h1M17 18h1" fill="none" stroke="#222" stroke-width="1.800"/><path d="M14 1v9M9.500 5.500h9" stroke="#3f8a25" stroke-width="3"/></svg></button>
              </div>
            </div>
          </section>
          <section class="sec dual"><h3><label><input type="checkbox">双制尺寸</label><svg class="chev"><use href="#i-chevdown"/></svg></h3></section>
          <div class="panel-end"></div>
        </aside>

        <div class="viewport">
          <svg class="sketch" viewBox="243 118 1423 887" role="img" aria-label="草图">
            <path d="M570 561V513h134v-24h191v-36h76v46h248v25h115v37z" fill="#3a3a90" fill-opacity=".42"/>
            <g stroke="#26262a" fill="none"><path d="M570.500 317v244M1334.500 317v244M570 325.500h764M570 392.500h134M704 391.500h191M971 398.500h363M704.500 383v106M895.500 383v70M971.500 390v63M1219.500 391v108"/></g>
            <g fill="#0b0b0d"><path d="M571 325.500l17-3v6zM1334 325.500l-17-3v6zM571 392.500l17-3v6zM704 392.500l-17-3v6zM705 391.500l17-3v6zM895 391.500l-17-3v6zM972 398.500l17-3v6zM1219 398.500l-17-3v6zM1220 398.500l17-3v6zM1334 398.500l-17-3v6z"/></g>
            <path d="M570 561.500h764v-38M570 561v-48h134v-24M895 489v-36M971 453v46M1219 499v25" fill="none" stroke="#0b0b0d" stroke-width="2"/>
            <path d="M531 561.500h39" stroke="#0b0b0d"/>
            <path d="M704 489.500h191M895 453.500h76M971 499.500h248M1219 523.500h115" stroke="#14149c" stroke-width="2"/>
            <g fill="#14149c"><circle cx="704" cy="489" r="2.500"/><circle cx="895" cy="489" r="2.500"/><circle cx="895" cy="453" r="2.500"/><circle cx="971" cy="453" r="2.500"/><circle cx="971" cy="499" r="2.500"/><circle cx="1219" cy="499" r="2.500"/><circle cx="1219" cy="524" r="2.500"/><circle cx="1334" cy="524" r="2.500"/><circle cx="530" cy="561" r="2.500"/></g>
            <g fill="#0b0b0d"><circle cx="570" cy="561" r="2.500"/><circle cx="704" cy="513" r="2.500"/><circle cx="1334" cy="561" r="3"/></g>
            <g class="dims"><text x="948" y="313">200</text><text x="625" y="379">35</text><text x="804" y="378">50</text><text x="1072" y="386">65</text><text x="1293" y="386">30</text></g>
            <g class="sel"><path d="M473 513.500h92M475 609.500h90M479.500 496v8M479.500 619v12" stroke="#74a6dc" fill="none"/><path d="M479.500 513l-2.500-14h5zM479.500 610l-2.500 14h5z" fill="#74a6dc"/><text class="d" x="448" y="583">25</text><text x="504" y="561">-0.02</text><text x="497" y="583">0</text></g>
            <g fill="none" stroke="#14202c" stroke-width="1.200"><circle cx="479.500" cy="496.500" r="3"/><path d="M477 496.500h5"/><circle cx="479.500" cy="626.500" r="3"/><path d="M477 626.500h5"/><path d="M566.500 510.500h6v6h-6zM566.500 606.500h6v6h-6z" fill="#8dc0ec"/></g>
            <use href="#g-v" x="578" y="532" width="12" height="12"/><use href="#g-h" x="631" y="522" width="12" height="12"/><use href="#g-v" x="712" y="496" width="12" height="12"/><use href="#g-h" x="793" y="498" width="12" height="12"/><use href="#g-v" x="903" y="466" width="12" height="12"/><use href="#g-h" x="927" y="462" width="12" height="12"/><use href="#g-v" x="979" y="471" width="12" height="12"/><use href="#g-h" x="1089" y="508" width="12" height="12"/><use href="#g-v" x="1227" y="506" width="12" height="12"/><use href="#g-h" x="1271" y="532" width="12" height="12"/><use href="#g-v" x="1342" y="537" width="12" height="12"/><use href="#g-c" x="564" y="569" width="12" height="12"/><use href="#g-c" x="923" y="541" width="12" height="12"/><use href="#g-c" x="946" y="541" width="12" height="12"/><use href="#g-h" x="960" y="541" width="12" height="12"/><use href="#g-h" x="923" y="569" width="12" height="12"/><use href="#g-c" x="946" y="569" width="12" height="12"/><use href="#g-c" x="1314" y="555" width="12" height="12"/>
            <g class="two"><text x="935" y="553">2</text><text x="1327" y="567" fill="#101070">2</text></g>
            <g stroke="#b3202c" fill="#b3202c"><path d="M952.500 561v-24M952 561.500h16M948 557l9 9M957 557l-9 9M952.500 555v12"/><path d="M952.500 529l3 9h-6zM970 561.500l-9-3v6z" stroke="none"/></g>
            <path d="M283 948v-30" stroke="#23662b" stroke-width="4"/><path d="M283 944v-18" stroke="#7fb583" stroke-width="1.500"/><path d="M283 917l4.500 10h-9z" fill="#23662b"/><path d="M283 948h24" stroke="#a02830" stroke-width="4"/><path d="M288 948h16" stroke="#e19a9c" stroke-width="1.500"/><path d="M314 948l-10-4.500v9z" fill="#a02830"/><circle cx="283" cy="948" r="5" fill="#17177a"/>
            <g class="axis"><text x="278" y="916" fill="#1f6a2a">Y</text><text x="312" y="952" fill="#b02a30">X</text><text class="view" x="254" y="1001">*前视</text></g>
            <g opacity=".55"><path d="M1584 153h-20v14q0 11 13 11h8" fill="none" stroke="#a6acba" stroke-width="2.500"/><path d="M1585 178l9-10v6q8 0 12-6-1 14-12 16v5z" fill="#8fb4c2" stroke="#6a8b97"/></g><path d="M1613 187l14 16M1627 187l-14 16" stroke="#dca3b0" stroke-width="7"/>
          </svg>
          <div class="hudbar">
            <div class="hud">
              <button aria-label="整屏显示"><svg class="ic"><use href="#i-magfit"/></svg></button><button aria-label="局部放大"><svg class="ic"><use href="#i-magarea"/></svg></button><button aria-label="上一视图"><svg class="ic"><use href="#i-scope"/></svg></button><button aria-label="剖面视图"><svg class="ic"><use href="#i-section"/></svg></button><button aria-label="动态注解"><svg class="ic"><use href="#i-annot"/></svg></button><button aria-label="视图定向"><svg class="ic"><use href="#i-orient"/></svg></button><svg class="tri"><use href="#i-down"/></svg><button aria-label="显示样式"><svg class="ic"><use href="#i-cube"/></svg></button><svg class="tri"><use href="#i-down"/></svg><button aria-label="隐藏/显示"><svg class="ic"><use href="#i-eye"/></svg></button><svg class="tri"><use href="#i-down"/></svg><button class="faint" aria-label="编辑外观"><svg class="ic"><use href="#i-ball"/></svg></button><button aria-label="应用布景"><svg class="ic"><use href="#i-scene"/></svg></button><svg class="tri"><use href="#i-down"/></svg><button aria-label="视图设定"><svg class="ic"><use href="#i-monitor"/></svg></button><svg class="tri"><use href="#i-down"/></svg>
            </div>
            <div class="docctl"><button aria-label="左停靠"><svg class="ic"><use href="#i-dockl"/></svg></button><button aria-label="右停靠"><svg class="ic"><use href="#i-dockr"/></svg></button><button aria-label="最小化"><svg class="ic"><use href="#i-min"/></svg></button><button aria-label="还原"><svg class="ic"><use href="#i-restore"/></svg></button><button aria-label="关闭"><svg class="ic"><use href="#i-close"/></svg></button></div>
          </div>
          <div class="flyout"><svg class="arr" viewBox="0 0 6 10"><path d="M1 1v8l4-4z" fill="#111"/></svg><svg class="ic" viewBox="0 0 20 20"><path d="M1 4l3-2 3 1v5l5-3 6 3v7l-7 4-10-5z" fill="#d9ae33" stroke="#4d3d0c"/><path d="M11 9v10M1 4l6 3" stroke="#4d3d0c"/><path d="M12 10h6v9h-6z" fill="#e8eaf0" stroke="#222"/><path d="M14 13h3M14 16h3" stroke="#222"/></svg>零件6&nbsp; (默认&lt;&lt;默认&gt;_显...</div>
          <div class="splitter"><i></i></div>
          <nav class="sidetabs"><button class="active" aria-label="资源"><svg class="ic"><use href="#i-home"/></svg></button><button aria-label="设计库"><svg class="ic"><use href="#i-books"/></svg></button><button aria-label="文件探索器"><svg class="ic"><use href="#i-folder"/></svg></button><button aria-label="视图调色板"><svg class="ic"><use href="#i-layout"/></svg></button><button aria-label="外观"><svg class="ic"><use href="#i-ball"/></svg></button><button aria-label="自定义属性"><svg class="ic"><use href="#i-props"/></svg></button></nav>
        </div>
      </div>
      <nav class="sheettabs">
        <span class="nav"><button disabled aria-label="第一个"><svg viewBox="0 0 16 14"><path d="M11 3v8L6 7zM5 3v8" fill="#8b8d8b" stroke="#8b8d8b"/></svg></button><button disabled aria-label="上一个"><svg viewBox="0 0 16 14"><path d="M10 3v8L5 7z" fill="#8b8d8b"/></svg></button><button disabled aria-label="下一个"><svg viewBox="0 0 16 14"><path d="M6 3v8l5-4z" fill="#8b8d8b"/></svg></button><button disabled aria-label="最后一个"><svg viewBox="0 0 16 14"><path d="M5 3v8l5-4zM11 3v8" fill="#8b8d8b" stroke="#8b8d8b"/></svg></button></span>
        <button class="active">模型</button><button>3D 视图</button><button>运动算例 1</button>
      </nav>
    </main>

    <aside class="pane">
      <header><svg class="ic16" viewBox="0 0 16 16"><path d="M8 3 3 8l5 5M13 3 8 8l5 5" fill="none" stroke="#222" stroke-width="2"/></svg><h2>SOLIDWORKS 资源</h2><svg class="ic16"><use href="#i-pin"/></svg></header>
      <a href="#" class="welcome"><svg class="ic"><use href="#i-home"/></svg>欢迎使用&nbsp; SOLIDWORKS</a>
      <section><h3>SOLIDWORKS 工具<svg class="chev"><use href="#i-chevup"/></svg></h3>
        <a href="#"><svg class="ic"><use href="#i-swdoc"/></svg>属性标签编制程序</a><a href="#"><svg class="ic"><use href="#i-swrx"/></svg>SOLIDWORKS Rx</a><a href="#"><svg class="ic"><use href="#i-swrx"/></svg>性能基准测试</a><a href="#"><svg class="ic"><use href="#i-compare"/></svg>比较我的评分</a><a href="#"><svg class="ic"><use href="#i-copy"/></svg>复制设置向导</a><a href="#"><svg class="ic"><use href="#i-myprod"/></svg>我的产品</a></section>
      <section><h3>在线资源<svg class="chev"><use href="#i-chevup"/></svg></h3><a href="#"><svg class="ic"><use href="#i-market"/></svg>3DEXPERIENCE Marketplace</a><a href="#"><svg class="ic"><use href="#i-hand"/></svg>Partner Solutions(解决方案)</a></section>
      <section><h3>订阅服务<svg class="chev"><use href="#i-chevup"/></svg></h3><a href="#"><svg class="ic"><use href="#i-globe"/></svg>订阅服务</a></section>
    </aside>
  </div>

  <footer class="status">
    <span class="msg">设定所选尺寸的属性。</span>
    <span class="c1">-185.55mm</span><span class="c2">20.81mm</span><span class="c3">0.00mm</span><span class="c4">欠定义</span><span class="c5">在编辑 草图1</span><span class="c6"><svg class="ic16"><use href="#i-light"/></svg></span><span class="c7">自定义 <svg viewBox="0 0 6 4"><path d="M0 4h6L3 0z" fill="#444"/></svg></span>
    <svg class="ic" viewBox="0 0 20 20"><path d="M1 6l6-3 11 7-5 8-9-5z" fill="#f1f1f1" stroke="#333"/><circle cx="6" cy="7" r="2" fill="#888"/><path d="M9 8l6 4-2 4" fill="none" stroke="#333"/></svg>
  </footer>

  <div class="taskbar">
    <button aria-label="开始"><svg viewBox="0 0 26 26"><path d="M5 7l7-1v7H5zM13 6l8-1v8h-8zM5 14h7v7l-7-1zM13 14h8v8l-8-1z" fill="#fff"/></svg></button>
    <button aria-label="Cortana"><svg viewBox="0 0 26 26"><circle cx="13" cy="13" r="7" fill="none" stroke="#fff" stroke-width="2.200"/></svg></button>
    <button aria-label="任务视图"><svg viewBox="0 0 26 26"><path d="M6 10h10v6H6zM6 5v3h10V5M6 21v-3h10v3M19.500 5v16M19 9h3v3h-3z" fill="none" stroke="#fff" stroke-width="1.200"/></svg></button>
    <button class="w49" aria-label="Edge"><svg viewBox="0 0 26 26"><path d="M3 13C4 5 9 2 14 2c7 0 10 5 9 13H9c0 6 8 7 13 4v4C15 27 4 25 5 15c0-4 3-6 5-7-4 0-6 3-7 5zm7-2h8c0-5-7-5-8 0z" fill="#2078bf"/></svg></button>
    <button class="w49" aria-label="QQ音乐"><svg viewBox="0 0 26 26"><circle cx="13" cy="13" r="12" fill="#eade20"/><path d="M8 4l11-3-1 3-6 2 4 10a5 5 0 1 1-4-1z" fill="#2ba04c"/></svg></button>
    <button class="w49" aria-label="AutoCAD"><svg viewBox="0 0 26 26"><path d="M1 1h24v24H1z" fill="#e8645c"/><path d="M1 1h24v12L1 8z" fill="#f4d4cd"/><path d="M5 20 12 5h3l7 15h-5l-3-5-4 5z" fill="#a51420"/></svg></button>
    <button class="w49" aria-label="SolidWorks 2018"><svg><use href="#i-swbig"/></svg></button>
    <button class="w49" aria-label="Chrome"><svg viewBox="0 0 26 26"><circle cx="13" cy="13" r="11" fill="#4aa454"/><path d="M13 13 3.500 7.500A11 11 0 0 1 23 8H13z" fill="#d9483b"/><path d="M13 13l10-5a11 11 0 0 1-10 16z" fill="#f2c63a"/><circle cx="13" cy="13" r="5" fill="#fff"/><circle cx="13" cy="13" r="4" fill="#4a80d8"/></svg></button>
    <button class="w49" aria-label="浏览器"><svg viewBox="0 0 26 26"><circle cx="13" cy="13" r="12" fill="#2e7fd0"/><circle cx="13" cy="13" r="10" fill="none" stroke="#b9dcf6" stroke-width="1.500"/><circle cx="13" cy="13" r="5" fill="#2a2a30" stroke="#dcedf8" stroke-width="1.500"/><path d="M13 7 6 6M18 11l1-8M17 17l6-4M10 18l4 6M8 13l-4 5" stroke="#dcedf8" stroke-width="1.500"/></svg></button>
    <button class="w49" aria-label="Premiere"><svg viewBox="0 0 26 26"><path d="M3 3h20v20H3z" fill="#2c0a38" stroke="#c07ac8" stroke-width="1.500"/><text x="13" y="17" font-family="Open Sans, sans-serif" font-size="11" text-anchor="middle" fill="#d49be0">Pr</text></svg></button>
    <button class="w49" aria-label="Photoshop"><svg viewBox="0 0 26 26"><path d="M3 3h20v20H3z" fill="#0b2430" stroke="#3fa7a7" stroke-width="1.500"/><text x="13" y="18" font-family="Open Sans, sans-serif" font-size="11" text-anchor="middle" fill="#39c4d6">Ps</text></svg></button>
    <button class="w49 hot" aria-label="录屏"><svg viewBox="0 0 26 26"><circle cx="13" cy="13" r="12" fill="#f7efe4"/><path d="M9 25v-5q-5-1-4-7-1-10 8-10t8 10q1 6-4 7v5z" fill="#fff" stroke="#777"/><circle cx="10" cy="10" r="1" fill="#222"/><circle cx="16" cy="10" r="1" fill="#222"/><path d="M8 13q5 3 10 0" fill="none" stroke="#333"/></svg></button>
    <button class="w49 run" aria-label="资源管理器"><svg viewBox="0 0 26 26"><path d="M2 4h8l2 3h12v16H2z" fill="#f7dc7c"/><path d="M2 8h22v2H2z" fill="#fff0b0"/><path d="M6 22v-8h14v8h-4v-4h-6v4z" fill="#49a9c0"/></svg></button>
    <button class="w49 run act" aria-label="SolidWorks 2018"><svg><use href="#i-swbig"/></svg></button>
    <div class="tray">
      <svg class="pie" viewBox="0 0 26 26"><circle cx="13" cy="13" r="12" fill="none" stroke="#fff3dd"/><path d="M13 13V1a12 12 0 0 1 8 21z" fill="#fff8ec"/></svg>
      <span class="net">0 B/s<br>0 B/s</span>
      <svg class="pie" viewBox="0 0 26 26"><circle cx="13" cy="13" r="12" fill="none" stroke="#fff3dd"/><path d="M13 13V1a12 12 0 0 1 8 21z" fill="#fff8ec"/></svg>
      <div class="trayicons">
        <svg viewBox="0 0 20 20"><path d="M3 10h14M7 6v8M13 5v9" stroke="#b22a14" stroke-width="2"/></svg>
        <svg viewBox="0 0 20 20"><path d="M5 8q0-7 5-7t5 7l3 8H2z" fill="#111"/><ellipse cx="9" cy="13" rx="4" ry="5" fill="#fff"/><path d="M5 8h9v2H5z" fill="#d22"/><circle cx="8" cy="5" r="1.300" fill="#fff"/><circle cx="12" cy="5" r="1.300" fill="#fff"/><path d="M9 10h10v6h-4l-2 2v-2H9z" fill="#f4c556"/><path d="M4 17h9v2H4z" fill="#e9a21c"/></svg>
        <svg viewBox="0 0 20 20"><rect x="1" y="1" width="18" height="18" rx="2" fill="#c40c10"/><path d="M6 7l8-3M10 5v10M7 11h6M7 16h5" stroke="#fff" stroke-width="1.500"/></svg>
        <svg viewBox="0 0 20 20"><path d="M2 2l8-1 8 1v8q-2 6-8 9-6-3-8-9z" fill="#a61a20"/><path d="M6 5l-2 2 3 2-3 2M10 5l1 5 2-4 1 4 2-5" fill="none" stroke="#fff" stroke-width="1.200"/><path d="M6 12l4 5 8-9" fill="none" stroke="#3bb54a" stroke-width="3"/></svg>
        <svg viewBox="0 0 20 20"><circle cx="10" cy="10" r="8.500" fill="#3a1410"/><circle cx="11" cy="11" r="5" fill="#c41a14"/></svg>
        <svg viewBox="0 0 20 20"><circle cx="10" cy="10" r="8.500" fill="#3a1410"/><circle cx="9" cy="9" r="5" fill="#c41a14"/><path d="M10 12h8v6h-8z" fill="#fff"/></svg>
        <svg viewBox="0 0 20 20"><path d="M6 5h12v9H8M4 10v7h12M12 14v3M2 3h5v6H2z" fill="none" stroke="#fff" stroke-width="1.200"/></svg>
        <svg viewBox="0 0 20 20"><path d="M2 8h3l4-4v12l-4-4H2zM11 7q2 3 0 6M14 5q3 5 0 10M17 3q4 7 0 14" fill="none" stroke="#fff" stroke-width="1.200"/></svg>
        <span>中</span>
      </div>
      <time>19:44:23<br>2019/1/16</time>
      <button class="notes" aria-label="通知"><svg viewBox="0 0 20 20"><path d="M2 2h15v11h-6l-3 4v-4H2z" fill="#fff"/><path d="M5 5h9M5 7.500h9M5 10h6" stroke="#8a6a1c"/></svg><span>5</span></button>
    </div>
  </div>
</div>
</body>
</html>
```
FILE: styles.css
```css
* { box-sizing: border-box; }
body { margin: 0; font: 13px/16px "Noto Sans", "Noto Sans CJK SC", sans-serif; color: #16181a; background: #b1b3b1; }
button { appearance: none; margin: 0; padding: 0; border: 0; background: none; font: inherit; color: inherit; white-space: nowrap; display: flex; align-items: center; justify-content: center; }
small { font-size: 11px; }
h1, h2, h3 { margin: 0; font-size: 13px; }
a { color: inherit; text-decoration: none; }
i { font-style: normal; }
.sprite { position: absolute; width: 0; height: 0; }
.ic { width: 19px; height: 19px; flex: none; }
.ic16 { width: 16px; height: 16px; flex: none; }
.tri { width: 6px; height: 4px; flex: none; }
.dd { width: 15px; height: 24px; }
.dd svg { width: 6px; height: 4px; }

.app { display: flex; flex-direction: column; min-height: 100vh; }

/* menu bar */
.menubar { display: flex; align-items: center; height: 31px; border-bottom: 1px solid #7e807e; }
.logo { align-self: flex-start; position: relative; z-index: 2; display: flex; align-items: center; gap: 5px; width: 144px; height: 34px; margin-left: 10px; padding-left: 6px; background: #fdfdfd; border: 1px solid #d4d4d4; border-top: 0; }
.logo-mark { width: 27px; height: 28px; margin-bottom: 4px; }
.logo-text { font: italic 400 16px/16px "Open Sans", sans-serif; color: #b83a30; padding-top: 6px; }
.logo-text b { font-weight: 700; }
.menus { display: flex; gap: 15px; margin-left: 29px; }
.menupin { width: 30px; height: 30px; margin-left: 17px; color: #3b7fa5; }
.qat { display: flex; align-items: center; height: 30px; padding-left: 15px; border-left: 2px solid #7e807e; }
.qat button:not(.dd) { width: 24px; height: 24px; }
.qat button.wide { width: 26px; }
.doc-title { flex: 1; text-align: center; font-weight: 400; }
.search { display: flex; align-items: center; width: 202px; height: 24px; padding: 0 4px; gap: 5px; border: 1px solid #222; background: #e9ecec; }
.search input { flex: 1; min-width: 0; border: 0; padding: 0; background: none; font: inherit; }
.search input::placeholder { color: #666; opacity: 1; }
.winctl { display: flex; align-items: center; color: #333; }
.winctl button:not(.dd) { width: 26px; height: 24px; }
.winctl button:first-child { margin-left: 2px; }
.winctl .q { font-size: 19px; font-weight: 600; }

/* ribbon */
.ribbon { display: flex; height: 87px; padding: 6px 6px 2px; border-bottom: 1px solid #7e807e; }
.big { position: relative; display: block; width: 49px; padding: 4px 4px 0; text-align: center; font-family: "Noto Sans CJK SC", "Noto Sans", sans-serif; line-height: 13px; white-space: normal; }
.big small { font-size: 10px; line-height: 10px; }
.big .ic { display: block; margin: 0 auto 1px; }
.big > .tri { display: block; position: absolute; left: 50%; bottom: 9px; margin-left: -3px; }
.big.low { padding-top: 11px; }
.big:disabled { color: #8a8c8a; }
.big.w68 { width: 68px; }
.big.w60 { width: 60px; }
.big.on { background: #80827e; border: 1px solid #565856; padding: 10px 3px 0; }
.latin { font: 12px/13px "Noto Sans", sans-serif; margin: 0 -3px; }
.big.split { padding: 0; border: 1px solid #5f615f; }
.split span { display: block; height: 58px; padding: 4px 3px 0; background: #80827e; border-bottom: 1px solid #5f615f; }
.split > .tri { bottom: 8px; }
.entities { display: grid; grid-template-columns: repeat(3, 40px) 30px; grid-template-rows: repeat(3, 26px); width: 151px; padding-left: 6px; }
.entities button { justify-content: flex-start; gap: 7px; }
.group { display: flex; padding-right: 1px; border-left: 1px solid #c6c8c6; }
.list { display: grid; grid-template-rows: repeat(3, 26px); width: 145px; padding: 0 6px 0 2px; }
.list button { justify-content: flex-start; gap: 7px; }
.list .tri { margin-left: auto; }

/* workspace */
.workspace { display: flex; flex: 1; border-bottom: 1px solid #7e807e; }
.center { flex: 1; display: flex; flex-direction: column; min-width: 0; }
.docrow { flex: 1; display: flex; }
.panel { position: relative; z-index: 1; width: 243px; flex: none; display: flex; flex-direction: column; border-right: 2px solid #8b8d8b; background: #b1b3b1; }
.cmdtabs { display: flex; width: 454px; height: 22px; margin-bottom: 4px; }
.cmdtabs button { width: 56px; padding-bottom: 2px; background: #9b9d9b; border-right: 1px solid #828482; border-bottom: 1px solid #7e807e; }
.cmdtabs .active { background: #b1b3b1; border-bottom: 0; color: #505250; }
.cmdtabs .mbd { width: 118px; font-size: 12px; }
.grip { display: flex; justify-content: center; align-items: center; height: 16px; border: solid #828482; border-width: 1px 0; }
.grip i, .splitter i { width: 7px; height: 7px; border: 1px solid #8b8d8b; border-radius: 50%; background: #c8cac8; }
.fmtabs { display: flex; height: 30px; padding: 4px 0 0 2px; border-bottom: 1px solid #828482; }
.fmtabs button { width: 40px; background: #9b9d9b; border: 1px solid #828482; border-width: 1px 1px 0 0; }
.fmtabs .active, .subtabs .active { background: #b1b3b1; margin-bottom: -1px; }
.pm-title { display: flex; align-items: center; height: 32px; padding: 0 12px 0 9px; }
.pm-title h2 { flex: 1; margin-left: 6px; font-size: 14px; font-weight: 500; }
.ok { width: 19px; height: 22px; margin-left: 6px; }
.subtabs { display: flex; height: 25px; margin: 12px 0 16px; padding-left: 2px; border-bottom: 1px solid #828482; color: #454745; }
.subtabs button { width: 38px; padding-bottom: 2px; background: #9b9d9b; border: 1px solid #828482; border-width: 1px 1px 0 0; }
.sec { margin: 0 6px 0 5px; padding: 0 4px 10px; border-top: 1px solid #868886; }
.sec h3 { display: flex; align-items: center; height: 27px; padding-bottom: 1px; font-weight: 600; color: #3c3e3c; }
.sec h3 small { font-weight: 500; }
.chev { width: 12px; height: 8px; margin: 0 -1px 0 auto; }
.styles { display: flex; margin: 0 0 6px 30px; }
.tb { width: 24px; height: 24px; border: 1px solid #767876; background: #a9aba9; }
.tb.on { background: #868886; }
.field { position: relative; display: grid; grid-template-columns: 32px 186px; align-items: center; height: 20px; margin-left: 3px; }
.field > input, .field > .combo { grid-column: 2; }
.fields { display: flex; flex-direction: column; gap: 10px; padding: 2px 0 2px; }
.combo { display: grid; margin: 0 1px; }
.combo select { grid-area: 1 / 1; appearance: none; height: 20px; padding: 0 3px; border: 0; border-radius: 0; background: #dcdedc; font: inherit; color: #16181a; }
.combo svg { grid-area: 1 / 1; width: 10px; height: 7px; margin: auto 3px auto auto; }
.field > input { width: 100%; height: 20px; padding: 0 3px; border: 1px solid #6f716f; background: #fcfdfc; font: inherit; font-size: 12px; }
.field > input.focus { border-color: #2f6fa3; }
.glyph { display: grid; width: 20px; font-size: 8px; line-height: 7px; color: #3a6f8b; }
.glyph i, .glyph .r { justify-self: end; }
.glyph b { font-weight: 500; color: #222; }
.glyph .l { justify-self: start; }
.ibeam { position: absolute; left: 42px; top: -7px; width: 10px; height: 24px; }
.tip { position: absolute; left: 55px; top: 1px; padding: 1px 5px; border: 1px solid #777; background: #f5f5f5; color: #555; font-size: 12px; line-height: 17px; box-shadow: 2px 2px 2px #0006; white-space: nowrap; }
.tick { display: flex; align-items: center; gap: 4px; height: 14px; margin: -3px 0 2px 35px; }
.tick small { margin-left: -4px; }
input[type=checkbox] { appearance: none; width: 13px; height: 13px; margin: 0; border: 1px solid #333; background: #f8faf8; }
.spin { height: 24px; margin-top: 8px; grid-template-columns: 32px 165px 21px; }
.spin > input { height: 24px; }
.spin > span { display: grid; gap: 1px; margin-left: 1px; }
.spin button { height: 11px; background: #dcdedc; }
.spin svg { width: 9px; height: 6px; }
.dimtext { display: flex; gap: 4px; margin-right: -1px; }
.dimtext > div { display: grid; gap: 4px; }
.dimtext textarea { flex: 1; min-width: 0; height: 51px; border: 0; padding: 0 2px; resize: none; background: #fcfdfc; font: inherit; font-size: 11px; line-height: 14px; }
.txt { font-size: 11px; }
.txt i { color: #2e6f8e; }
.pill i { border: 2px solid #3b7f9e; border-radius: 6px; line-height: 8px; color: #111; padding: 0 2px; }
.tbrows { display: grid; gap: 2px; margin-top: 8px; }
.tbrows div { display: flex; gap: 2px; }
.dual label { display: flex; align-items: center; gap: 10px; }
.panel-end { flex: 1; margin: 0 2px 2px 0; border-bottom: 1px solid #868886; }

/* graphics area */
.viewport { position: relative; flex: 1; min-width: 0; border-right: 2px solid #8b8d8b; border-bottom: 1px solid #868886; background: linear-gradient(#dedef0, #cac9da 17%, #b8b7bb 32%, #a9a7a8 46%, #96938f 59%, #7b7267 87%, #6a5f50); }
.sketch { position: absolute; inset: 0; width: 100%; height: 100%; }
.dims text, .sel text { font-family: "Roboto Condensed", "Noto Sans Mono CJK SC", "Liberation Sans", sans-serif; text-anchor: middle; }
.dims text { font-size: 36px; fill: #0b0b0d; }
.sel text { font-size: 18px; fill: #74a6dc; }
.sel .d { font-size: 36px; }
.two text, .axis text { font: 700 12px "Liberation Serif", serif; }
.axis .view { font: 700 11px "Noto Sans", "Noto Sans CJK SC", sans-serif; }
.hudbar { position: relative; display: grid; grid-template-columns: 1fr auto 1fr; height: 30px; padding-right: 7px; }
.hud { grid-column: 2; display: flex; align-items: center; opacity: .9; }
.hud button, .docctl button { width: 26px; height: 26px; }
.hud .tri { margin: 0 4px; opacity: .5; }
.hud .faint { opacity: .2; }
.docctl { display: flex; align-items: center; justify-content: flex-end; color: #6f717a; }
.flyout { position: relative; display: flex; align-items: center; gap: 3px; margin: -2px 0 0 5px; font-size: 12px; }
.arr { width: 6px; height: 10px; margin-right: 8px; }
.splitter { position: absolute; left: -2px; top: 425px; display: flex; align-items: center; width: 9px; height: 37px; background: #b1b3b1; }
.sidetabs { position: absolute; right: -2px; top: 75px; width: 27px; border: 1px solid #7e807e; border-right: 0; }
.sidetabs button { width: 26px; height: 24px; background: #979997; border-bottom: 1px solid #7e807e; }
.sidetabs .active { background: #b1b3b1; }
.sheettabs { display: flex; height: 15px; padding-left: 27px; line-height: 14px; }
.sheettabs .nav { display: flex; border-top: 1px solid #222; }
.sheettabs .nav button { width: 16px; padding: 0; background: #a5a7a5; border: 1px solid #8b8d8b; }
.sheettabs .nav svg { width: 14px; height: 12px; }
.sheettabs button { padding: 0 7px 2px; background: #9b9d9b; border-right: 1px solid #868886; }
.sheettabs > .active { padding: 0 11px 2px 13px; background: #b1b3b1; }
.sheettabs > button:last-child { padding-right: 13px; }

/* task pane */
.pane { width: 252px; flex: none; color: #55585a; font-size: 11px; border-left: 1px solid #222; }
.pane header { display: flex; align-items: center; height: 22px; padding: 0 4px 0 6px; border-bottom: 1px solid #111; color: #16181a; }
.pane header h2 { flex: 1; text-align: center; font-size: 12px; }
.pane a { display: flex; align-items: center; gap: 6px; height: 28px; padding: 0 0 1px 2px; white-space: nowrap; }
.pane .welcome { height: 73px; margin-left: 14px; gap: 5px; padding: 3px 0 0 1px; }
.pane section { margin: 0 26px 23px 14px; border-top: 1px solid #868886; }
.pane h3 { display: flex; align-items: center; height: 23px; padding-left: 3px; font-size: 12px; color: #444644; }
.pane .chev { margin-right: 7px; }

/* status bar */
.status { display: flex; align-items: center; height: 18px; padding: 0 3px 0 2px; font-size: 12px; }
.msg { flex: 1; }
.status span:not(.msg) { border-color: #cfd1cf; }
.status .c1 { width: 97px; }
.status .c2 { width: 61px; }
.status .c3 { width: 48px; overflow: hidden; }
.status .c4 { width: 43px; border-right: 1px solid #cfd1cf; }
.status .c5 { width: 84px; margin-left: 7px; padding-left: 4px; border: solid #cfd1cf; border-width: 0 1px; }
.status .c6 { display: flex; justify-content: center; width: 31px; border-right: 1px solid #cfd1cf; padding-left: 9px; }
.status .c7 { display: flex; align-items: center; gap: 17px; width: 151px; padding-left: 29px; }
.status .c7 svg { width: 6px; height: 4px; }

/* system taskbar */
.taskbar { display: flex; height: 40px; color: #fff8ec; background: linear-gradient(90deg, #6a3813, #442c10 12%, #4a2e10 22%, #702f10 36%, #5c2a10 48%, #5a2a10 53%, #884016 59%, #6b2e14 65%, #7c3a14 71%, #864a12 79%, #84600c 88%, #7c680c); }
.taskbar > button { width: 48px; }
.taskbar > button:nth-child(3) { width: 50px; }
.taskbar > button.w49 { width: 49px; }
.taskbar > button svg { width: 26px; height: 26px; }
.taskbar .hot { background: #cb6a14; border-bottom: 2px solid #ff7808; }
.taskbar .run { border-bottom: 2px solid #ffd9a8; }
.taskbar .act { background: #94602a; }
.tray { display: flex; align-items: center; margin-left: auto; }
.pie { width: 26px; height: 26px; }
.net { width: 73px; padding-left: 28px; font: 700 11px/12px "Liberation Sans", sans-serif; white-space: nowrap; }
.trayicons { display: flex; align-items: center; margin-left: 6px; }
.trayicons > * { width: 18px; height: 18px; margin: 0 3px; flex: none; }
.trayicons span { font-size: 15px; line-height: 18px; }
.tray time { width: 68px; text-align: center; font-size: 12px; line-height: 19px; }
.notes { position: relative; width: 56px; height: 40px; }
.notes svg { width: 19px; height: 19px; margin: 0 6px 4px 0; }
.notes span { position: absolute; left: 24px; top: 19px; width: 16px; height: 16px; border: 1px solid #cdb98a; border-radius: 50%; background: #7c680c; font-size: 11px; line-height: 14px; }
```
